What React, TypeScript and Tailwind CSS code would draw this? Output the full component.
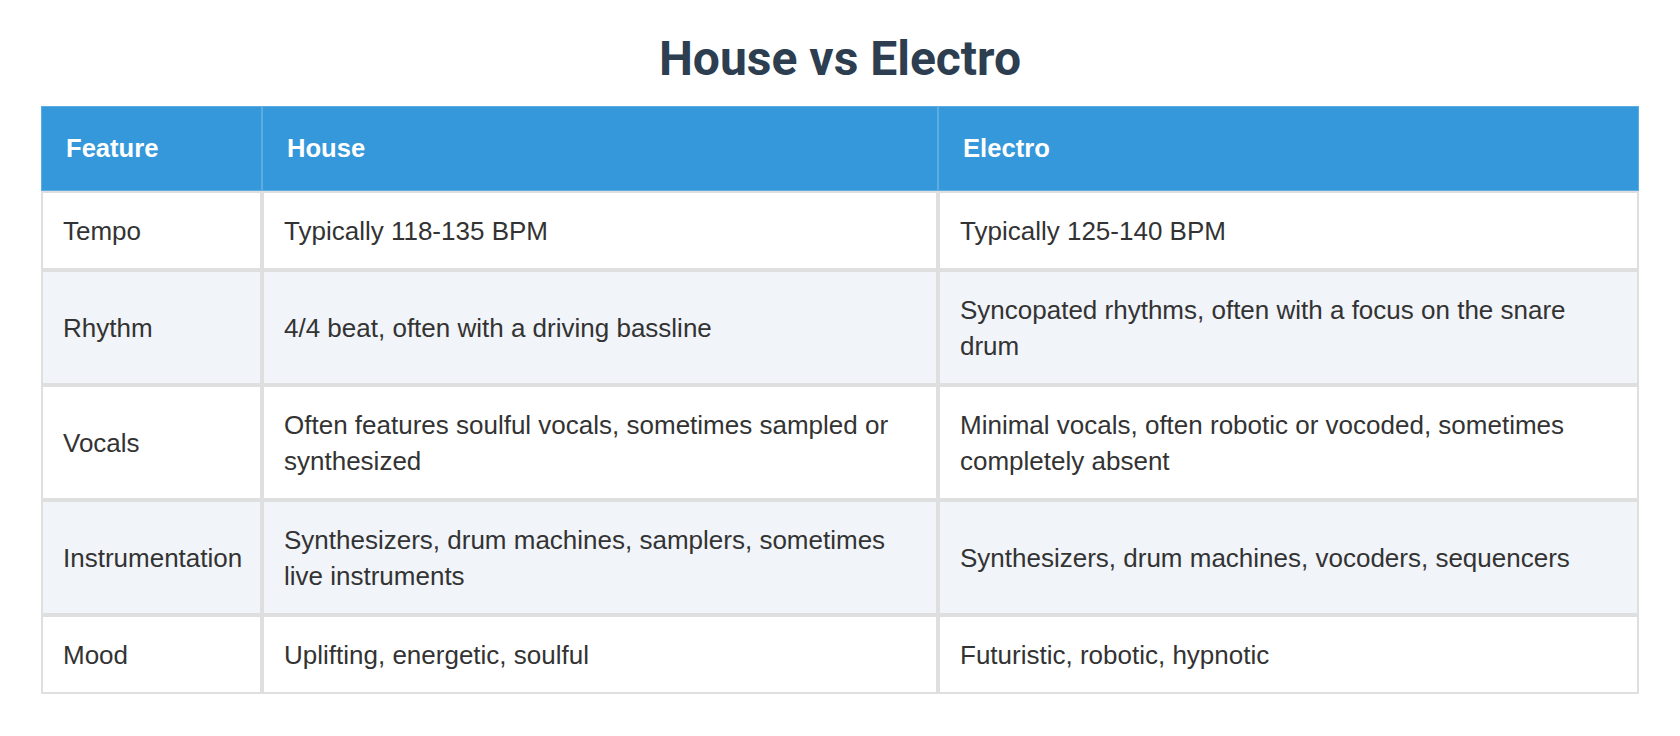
const rows = [
  {
    feature: 'Tempo',
    house: 'Typically 118-135 BPM',
    electro: 'Typically 125-140 BPM',
  },
  {
    feature: 'Rhythm',
    house: '4/4 beat, often with a driving bassline',
    electro: 'Syncopated rhythms, often with a focus on the snare drum',
  },
  {
    feature: 'Vocals',
    house: 'Often features soulful vocals, sometimes sampled or synthesized',
    electro: 'Minimal vocals, often robotic or vocoded, sometimes completely absent',
  },
  {
    feature: 'Instrumentation',
    house: 'Synthesizers, drum machines, samplers, sometimes live instruments',
    electro: 'Synthesizers, drum machines, vocoders, sequencers',
  },
  {
    feature: 'Mood',
    house: 'Uplifting, energetic, soulful',
    electro: 'Futuristic, robotic, hypnotic',
  },
];

export default function App() {
  return (
    <main className="min-h-screen bg-white px-[41px] pt-[30px] pb-10">
      <h1 className="mb-[18px] text-center font-['Roboto',sans-serif] text-[48px] font-bold leading-[1.2] text-[#2c3e50]">
        House vs Electro
      </h1>

      <table className="w-full table-fixed border-separate border-spacing-0 font-['Liberation_Sans',Arial,sans-serif]">
        <thead>
          <tr className="bg-[#3498db] text-left text-[25.6px] leading-[1.4] text-white">
            <th className="w-[221px] border border-[#5dade2] px-6 py-6 font-bold">Feature</th>
            <th className="w-[676px] border border-[#5dade2] px-6 py-6 font-bold">House</th>
            <th className="border border-[#5dade2] px-6 py-6 font-bold">Electro</th>
          </tr>
        </thead>
        <tbody className="text-[26px] leading-[36px] text-[#333333]">
          {rows.map((r, i) => (
            <tr key={r.feature} className={i % 2 === 1 ? 'bg-[#f1f4f9]' : 'bg-white'}>
              <td className="border-2 border-[#dfdfdf] px-5 py-[19.5px] align-middle">{r.feature}</td>
              <td className="border-2 border-[#dfdfdf] px-5 py-[19.5px] align-middle">{r.house}</td>
              <td className="border-2 border-[#dfdfdf] px-5 py-[19.5px] align-middle">{r.electro}</td>
            </tr>
          ))}
        </tbody>
      </table>
    </main>
  );
}
